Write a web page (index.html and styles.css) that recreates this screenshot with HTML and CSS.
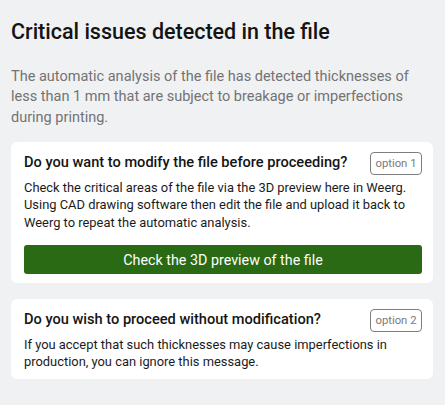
FILE: index.html
```html
<!DOCTYPE html>
<html lang="en">
<head>
<meta charset="utf-8">
<title>Critical issues</title>
<link rel="stylesheet" href="styles.css">
</head>
<body>
<main class="page">
  <h1 class="title">Critical issues detected in the file</h1>
  <p class="intro">The automatic analysis of the file has detected thicknesses of less than 1 mm that are subject to breakage or imperfections during printing.</p>
  <section class="card">
    <div class="card-head">
      <h2 class="card-title">Do you want to modify the file before proceeding?</h2>
      <span class="badge">option 1</span>
    </div>
    <p class="card-text">Check the critical areas of the file via the 3D preview here in Weerg. Using CAD drawing software then edit the file and upload it back to Weerg to repeat the automatic analysis.</p>
    <button class="btn">Check the 3D preview of the file</button>
  </section>
  <section class="card">
    <div class="card-head">
      <h2 class="card-title">Do you wish to proceed without modification?</h2>
      <span class="badge">option 2</span>
    </div>
    <p class="card-text">If you accept that such thicknesses may cause imperfections in production, you can ignore this message.</p>
  </section>
</main>
</body>
</html>
```
FILE: styles.css
```css
html, body {
  margin: 0;
  padding: 0;
  background: #f0f1f3;
}
body {
  font-family: Roboto, "Liberation Sans", Arial, sans-serif;
  color: #1b1b1b;
}
.page {
  padding: 19px 12px 0 11px;
  display: flex;
  flex-direction: column;
}
.title {
  margin: 0;
  font-size: 21.5px;
  font-weight: 500;
  line-height: 26px;
  color: #141414;
}
.intro {
  margin: 22px 0 14px;
  font-size: 14.5px;
  line-height: 20.3px;
  color: #737373;
}
.card {
  background: #fff;
  border-radius: 6px;
  padding: 10px 11px 8.5px 13px;
  margin-bottom: 16px;
}
.card-head {
  display: flex;
  justify-content: space-between;
  align-items: flex-start;
  gap: 8px;
}
.card-title {
  margin: 0;
  font-size: 14.6px;
  font-weight: 500;
  line-height: 20px;
  color: #141414;
}
.badge {
  flex: none;
  border: 1px solid #7d7d7d;
  border-radius: 4px;
  font-size: 11.3px;
  line-height: 21px;
  padding: 0 4.5px;
  color: #7a7a7a;
}
.card-text {
  margin: 4px 0 0;
  font-size: 12.9px;
  line-height: 17.5px;
  color: #1b1b1b;
}
.btn {
  display: block;
  width: 100%;
  margin-top: 13.5px;
  height: 29.5px;
  border: none;
  border-radius: 3px;
  background: #2b6a14;
  color: #fff;
  font-family: inherit;
  font-size: 14.3px;
  font-weight: 400;
  padding: 0;
}
```
